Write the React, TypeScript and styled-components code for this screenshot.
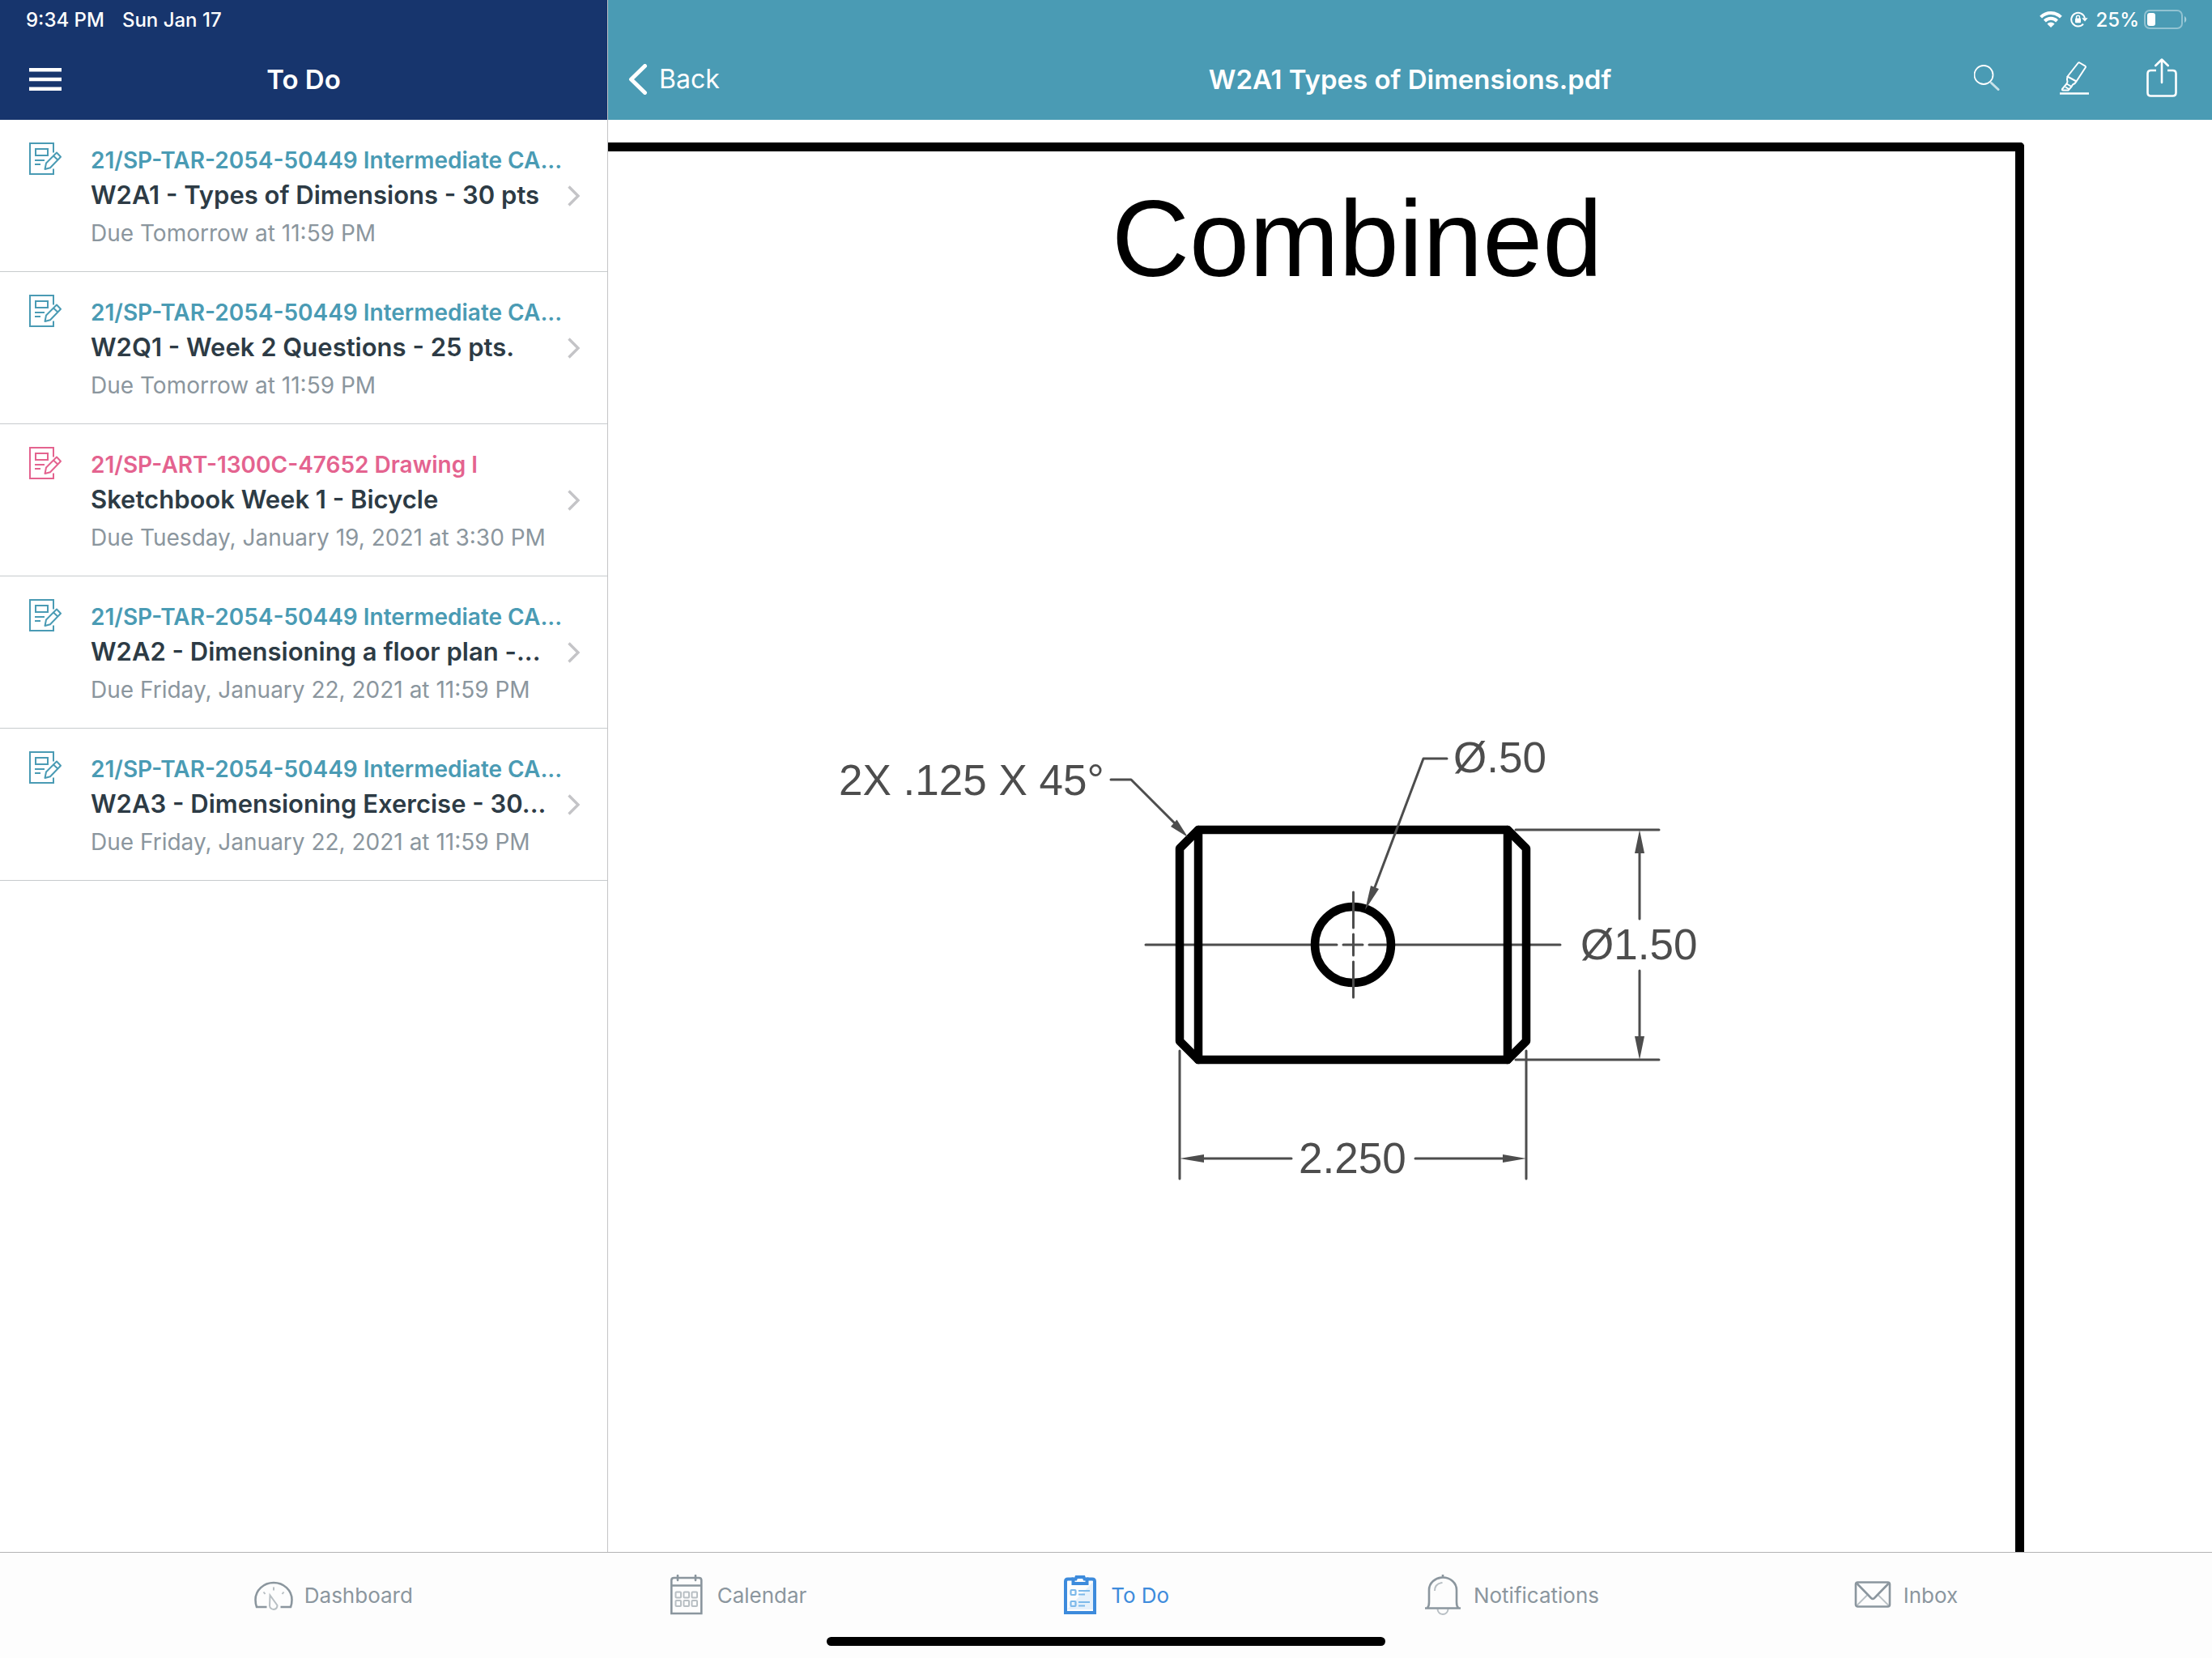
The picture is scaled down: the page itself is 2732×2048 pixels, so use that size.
import React from "react";
import styled, { createGlobalStyle } from "styled-components";

const colors = {
  navy: "#17356d",
  teal: "#4a9bb4",
  pink: "#e4638f",
  ink: "#2d3b45",
  muted: "#8b969e",
  line: "#c7cbcd",
  blue: "#3d8bdc",
  pen: "#4d4d4d",
};

const GlobalStyle = createGlobalStyle`
  *, *::before, *::after { box-sizing: border-box; }
  body {
    margin: 0;
    background: #fff;
    font-family: Inter, "Liberation Sans", sans-serif;
  }
  button { border: 0; padding: 0; background: none; color: inherit; font: inherit; cursor: pointer; }
  a { color: inherit; text-decoration: none; }
  ul { list-style: none; margin: 0; padding: 0; }
  h1, h2, p { margin: 0; }
  svg { display: block; flex: none; }
`;

const Screen = styled.div`
  display: flex;
  flex-direction: column;
  min-height: 100vh;
`;

const Split = styled.div`
  display: flex;
  flex: 1;
`;

const Sidebar = styled.aside`
  flex: 0 0 751px;
  border-right: 1px solid #c4c4c6;
`;

const Viewer = styled.main`
  display: flex;
  flex-direction: column;
  flex: 1;
  min-width: 0;
`;

const TopBar = styled.header<{ $tone: string }>`
  background: ${(p) => p.$tone};
  color: #fff;
`;

const StatusBar = styled.div<{ $end?: boolean }>`
  display: flex;
  align-items: center;
  justify-content: ${(p) => (p.$end ? "flex-end" : "flex-start")};
  gap: ${(p) => (p.$end ? "6px" : "22px")};
  height: 48px;
  padding: 0 30px 0 32px;
  font-size: 24px;
  font-weight: 500;
`;

const StatusIcons = styled.div`
  display: flex;
  align-items: center;
  gap: 10px;
`;

const NavBar = styled.div<{ $side: string }>`
  display: grid;
  grid-template-columns: ${(p) => p.$side} 1fr ${(p) => p.$side};
  align-items: center;
  height: 100px;
`;

const NavTitle = styled.h1`
  font-size: 33px;
  font-weight: 600;
  line-height: 44px;
  text-align: center;
  white-space: nowrap;
`;

const MenuButton = styled.button`
  justify-self: start;
  padding-left: 36px;
`;

const BackButton = styled.button`
  display: flex;
  align-items: center;
  justify-self: start;
  gap: 14px;
  padding-left: 25px;
  font-size: 32px;
  line-height: 44px;
`;

const Tools = styled.div`
  display: flex;
  align-items: center;
  justify-self: end;
  gap: 60px;
  padding: 0 38px 4px 0;
`;

const ToolButton = styled.button`
  display: grid;
  place-items: center;
  width: 48px;
  height: 52px;
`;

const Row = styled.a`
  display: flex;
  height: 188px;
  padding: 28px 33px 27px 36px;
  border-bottom: 1px solid ${colors.line};
`;

const RowText = styled.div`
  flex: 1;
  min-width: 0;
  padding-top: 4px;
  margin-left: 35px;
  white-space: nowrap;
`;

const Course = styled.p<{ $tone: string }>`
  color: ${(p) => p.$tone};
  font-size: 28px;
  font-weight: 600;
  line-height: 36px;
`;

const TaskName = styled.h2`
  color: ${colors.ink};
  font-size: 31px;
  font-weight: 600;
  line-height: 50px;
`;

const Due = styled.p`
  color: ${colors.muted};
  font-size: 28px;
  font-weight: 400;
  line-height: 44px;
`;

const RowArrow = styled.span`
  align-self: center;
`;

const Sheet = styled.article`
  flex: 1;
  margin: 28px 232px 0 0;
  padding: 38px 0 0 112px;
  border: solid #000;
  border-width: 11px 11px 0 0;
  border-top-right-radius: 5px;
`;

const SheetTitle = styled.h2`
  color: #000;
  font-family: "Liberation Sans", Arial, sans-serif;
  font-size: 133px;
  font-weight: 400;
  line-height: 140px;
  text-align: center;
`;

const Figure = styled.figure`
  display: flex;
  justify-content: center;
  margin: 535px 0 0;
`;

const TabBar = styled.nav`
  border-top: 1px solid #b3b3b5;
  background: #fdfdfd;
`;

const TabList = styled.ul`
  display: flex;
  justify-content: space-evenly;
  padding-top: 26px;
`;

const Tab = styled.a<{ $active?: boolean }>`
  display: flex;
  align-items: center;
  gap: 14px;
  height: 52px;
  color: ${(p) => (p.$active ? colors.blue : colors.muted)};
  font-size: 26px;
  font-weight: 400;
`;

const HomeIndicator = styled.div`
  width: 690px;
  height: 11px;
  margin: 26px auto 15px;
  border-radius: 6px;
  background: #000;
`;

const WifiIcon = () => (
  <svg width="28" height="20" viewBox="0 0 28 20" fill="none" stroke="#fff" strokeWidth="4">
    <path d="M1.6 7.2a17.6 17.6 0 0 1 24.8 0" />
    <path d="M6.4 12a10.8 10.8 0 0 1 15.2 0" />
    <path d="M14 20l-4.6-4.6a6.6 6.6 0 0 1 9.2 0z" fill="#fff" stroke="none" />
  </svg>
);

const RotationLockIcon = () => (
  <svg width="22" height="20" viewBox="0 0 22 20" fill="none" stroke="#fff" strokeWidth="2">
    <path d="M17.8 8.2A8.4 8.4 0 1 0 16 15.6" />
    <path d="M14.2 8.2h7.4l-3.6 4.4z" fill="#fff" stroke="none" />
    <rect x="6" y="8.6" width="7" height="5.6" rx="1" fill="#fff" stroke="none" />
    <path d="M7.5 9V7.2a2 2 0 0 1 4 0V9" strokeWidth="1.4" />
  </svg>
);

const BatteryIcon = () => (
  <svg width="54" height="24" viewBox="0 0 54 24">
    <rect x="1" y="1" width="46" height="22" rx="6" fill="none" stroke="#fff" strokeWidth="2" opacity="0.4" />
    <rect x="4" y="4" width="10" height="16" rx="3" fill="#fff" />
    <path d="M50 8c3 1.500 3 6.500 0 8z" fill="#fff" opacity="0.5" />
  </svg>
);

const MenuIcon = () => (
  <svg width="40" height="28" viewBox="0 0 40 28" fill="#fff">
    <path d="M0 0h40v4.600H0zM0 11.700h40v4.600H0zM0 23.400h40V28H0z" />
  </svg>
);

const BackIcon = () => (
  <svg width="24" height="38" viewBox="0 0 24 38" fill="none" stroke="#fff" strokeWidth="5" strokeLinecap="round" strokeLinejoin="round">
    <path d="M20.500 2.500L3.500 19l17 16.500" />
  </svg>
);

const SearchIcon = () => (
  <svg width="32" height="32" viewBox="0 0 32 32" fill="none" stroke="#fff">
    <circle cx="12" cy="12.500" r="11.500" strokeWidth="1.800" />
    <path d="M21.500 22.500l8.500 8" strokeWidth="3" strokeLinecap="round" opacity="0.700" />
  </svg>
);

const HighlighterIcon = () => (
  <svg width="36" height="41" viewBox="0 0 36 41" fill="none" stroke="#fff" strokeWidth="2" strokeLinejoin="round">
    <path d="M0 39.500h36" strokeWidth="2.400" />
    <path d="M24.500 1.500l7 4.200q.8.600.3 1.500L20.500 24.500 9.500 18.500 22.500 2q.8-1 2-.5z" />
    <path d="M9.500 18.500q-1 3.500 0 6.500l-1 2.500 6 3.500 1.500-2.500q3-1 4.500-4" />
    <path d="M8.500 27.500L3 34q-.5 1.500 1 1.500h6.500l4-4.500" />
    <path d="M7 31.500l5 3" />
  </svg>
);

const ShareIcon = () => (
  <svg width="38" height="48" viewBox="0 0 38 48" fill="none" stroke="#fff" strokeWidth="2.600" strokeLinecap="round" strokeLinejoin="round">
    <path d="M12 15H5.500Q1.500 15 1.500 19v23.500q0 4 4 4h27q4 0 4-4V19q0-4-4-4H26" strokeLinecap="butt" />
    <path d="M19 30V2M11.300 9L19 1.500 26.700 9" />
  </svg>
);

const AssignmentIcon = ({ tone }: { tone: string }) => (
  <svg width="41" height="40" viewBox="0 0 41 40" fill="none" stroke={tone} strokeWidth="2">
    <path d="M30 12.500V1H1v38h29v-6.500" />
    <path d="M8 8h15v8H8zM7 22h12M7 27h7" />
    <path d="M19.500 33l1.500-7.500L34 12.500l5 5.200-13 13.500z" strokeLinejoin="round" />
    <path d="M30 16.500l5.300 5" />
  </svg>
);

const ChevronIcon = () => (
  <svg width="16" height="26" viewBox="0 0 16 26" fill="none" stroke="#c4c4c7" strokeWidth="3.400">
    <path d="M1.500 1.500L13 13 1.500 24.500" />
  </svg>
);

const tabIcon = { width: 48, height: 50, viewBox: "0 0 48 50", fill: "none", stroke: "currentColor", strokeWidth: 2.6 };

const DashboardIcon = () => (
  <svg {...tabIcon}>
    <path d="M15.500 40H3q-1.500-4-1.500-9a22.500 21 0 0 1 45 0q0 5-1.500 9H32.500" />
    <g strokeWidth="2" opacity="0.600">
      <path d="M24 15.500v4M11.500 21.500l2 2.500M36.500 21.500l-2 2.500" />
      <path d="M19.500 25.500l-.5 13q.5 4 5 4.500 4.500-.5 4.500-5z" />
    </g>
  </svg>
);

const CalendarIcon = () => (
  <svg {...tabIcon}>
    <path d="M5.300 48V7Q5.300 4 8.300 4h31q3 0 3 3v41zM5.300 13.500h37" />
    <path d="M13 1v6M35 1v6" strokeLinecap="round" />
    <g strokeWidth="2" opacity="0.600">
      {[21.5, 32].map((y) =>
        [10.5, 20.5, 30.5].map((x) => <rect key={`${x}-${y}`} x={x} y={y} width="6.500" height="7" rx="1" />)
      )}
    </g>
  </svg>
);

const TodoIcon = () => (
  <svg {...tabIcon} strokeWidth={4}>
    <path d="M40 9v34H8z" fill="#e6f1fb" stroke="none" />
    <path d="M16 5.500H9Q6 5.500 6 8.500V47h36V8.500q0-3-3-3H32" />
    <path d="M15.500 11V5.500h3L19.500 3h9l1 2.500h3V11z" />
    <g strokeWidth="2.200" stroke="#7db9ea">
      <rect x="12.500" y="19" width="6" height="6" rx="1" />
      <rect x="12.500" y="33" width="6" height="6" rx="1" />
      <path d="M22 20h14M22 24.500h8M22 34h14M22 38.500h8" />
    </g>
  </svg>
);

const BellIcon = () => (
  <svg {...tabIcon}>
    <path d="M2 41.500h44M5 41q2-2 2-7V19a17 15.500 0 0 1 34 0v15q0 5 2 7" />
    <path d="M24 0v4" />
    <g strokeWidth="2" opacity="0.600">
      <path d="M14 20q0-9 9.500-10M17.500 42.500a6.500 6.500 0 0 0 13 0" />
    </g>
  </svg>
);

const InboxIcon = () => (
  <svg {...tabIcon}>
    <rect x="3" y="9.500" width="42" height="30" rx="2.500" />
    <path d="M4.500 11L22 29q2 1.800 4 0L43.500 11" />
    <path d="M4.500 38L17 25.500M43.500 38L31 25.500" strokeWidth="1.800" opacity="0.600" />
  </svg>
);

const PartDrawing = () => (
  <svg
    width="1300"
    height="580"
    viewBox="1026 900 1300 580"
    role="img"
    aria-label="Dimensioned part"
    strokeLinecap="round"
    strokeLinejoin="round"
  >
    <g fill="none" stroke={colors.pen} strokeWidth="3">
      <path d="M1415 1167H1651M1659 1167H1683M1691 1167H1927" />
      <path d="M1872 1025H2049M1872 1309H2049M2025 1050V1135M2025 1199V1285" />
      <path d="M1457 1298V1456M1885 1298V1456M1485 1431H1595M1748 1431H1860" />
      <path d="M1372 963H1397L1452 1018" />
    </g>
    <g fill="none" stroke="#000" strokeWidth="10.500">
      <path d="M1480 1025H1862L1885 1048V1286L1862 1309H1480L1457 1286V1048Z" />
      <path d="M1480 1025V1309M1862 1025V1309" />
      <circle cx="1671" cy="1167" r="47" />
    </g>
    <g fill="none" stroke={colors.pen} strokeWidth="3">
      <path d="M1671.500 1102V1146M1671.500 1154V1180M1671.500 1188V1232" />
      <path d="M1787 937H1758L1698 1096" />
    </g>
    <g fill={colors.pen}>
      <path d="M1467 1034l-21-13 7.500-8.500z" />
      <path d="M1686 1124l7-30 10 4z" />
      <path d="M2025 1025l6 29h-12zM2025 1309l6-29h-12z" />
      <path d="M1457 1431l30-5v10zM1885 1431l-29-5v10z" />
    </g>
    <g fill={colors.pen} fontFamily='"Liberation Sans", Arial, sans-serif' fontSize="53">
      <text x="1036" y="982">2X .125 X 45°</text>
      <text x="1795" y="954">Ø.50</text>
      <text x="1952" y="1185">Ø1.50</text>
      <text x="1604" y="1449">2.250</text>
    </g>
  </svg>
);

const cad = "21/SP-TAR-2054-50449 Intermediate CA...";

const tasks = [
  { course: cad, name: "W2A1 - Types of Dimensions - 30 pts", due: "Due Tomorrow at 11:59 PM", tone: colors.teal },
  { course: cad, name: "W2Q1 - Week 2 Questions - 25 pts.", due: "Due Tomorrow at 11:59 PM", tone: colors.teal },
  { course: "21/SP-ART-1300C-47652 Drawing I", name: "Sketchbook Week 1 - Bicycle", due: "Due Tuesday, January 19, 2021 at 3:30 PM", tone: colors.pink },
  { course: cad, name: "W2A2 - Dimensioning a floor plan -...", due: "Due Friday, January 22, 2021 at 11:59 PM", tone: colors.teal },
  { course: cad, name: "W2A3 - Dimensioning Exercise - 30...", due: "Due Friday, January 22, 2021 at 11:59 PM", tone: colors.teal },
];

const tabs = [
  { label: "Dashboard", Icon: DashboardIcon },
  { label: "Calendar", Icon: CalendarIcon },
  { label: "To Do", Icon: TodoIcon, active: true },
  { label: "Notifications", Icon: BellIcon },
  { label: "Inbox", Icon: InboxIcon },
];

export default function App() {
  return (
    <Screen>
      <GlobalStyle />
      <Split>
        <Sidebar>
          <TopBar $tone={colors.navy}>
            <StatusBar>
              <span>9:34 PM</span>
              <span>Sun Jan 17</span>
            </StatusBar>
            <NavBar $side="120px">
              <MenuButton aria-label="Menu"><MenuIcon /></MenuButton>
              <NavTitle>To Do</NavTitle>
            </NavBar>
          </TopBar>
          <ul>
            {tasks.map((t) => (
              <li key={t.name}>
                <Row href="#">
                  <AssignmentIcon tone={t.tone} />
                  <RowText>
                    <Course $tone={t.tone}>{t.course}</Course>
                    <TaskName>{t.name}</TaskName>
                    <Due>{t.due}</Due>
                  </RowText>
                  <RowArrow><ChevronIcon /></RowArrow>
                </Row>
              </li>
            ))}
          </ul>
        </Sidebar>
        <Viewer>
          <TopBar $tone={colors.teal}>
            <StatusBar $end>
              <StatusIcons>
                <WifiIcon />
                <RotationLockIcon />
                <span>25%</span>
              </StatusIcons>
              <BatteryIcon />
            </StatusBar>
            <NavBar $side="360px">
              <BackButton><BackIcon />Back</BackButton>
              <NavTitle>W2A1 Types of Dimensions.pdf</NavTitle>
              <Tools>
                <ToolButton aria-label="Search"><SearchIcon /></ToolButton>
                <ToolButton aria-label="Annotate"><HighlighterIcon /></ToolButton>
                <ToolButton aria-label="Share"><ShareIcon /></ToolButton>
              </Tools>
            </NavBar>
          </TopBar>
          <Sheet>
            <SheetTitle>Combined</SheetTitle>
            <Figure><PartDrawing /></Figure>
          </Sheet>
        </Viewer>
      </Split>
      <TabBar>
        <TabList>
          {tabs.map(({ label, Icon, active }) => (
            <li key={label}>
              <Tab href="#" $active={active}><Icon />{label}</Tab>
            </li>
          ))}
        </TabList>
        <HomeIndicator />
      </TabBar>
    </Screen>
  );
}
